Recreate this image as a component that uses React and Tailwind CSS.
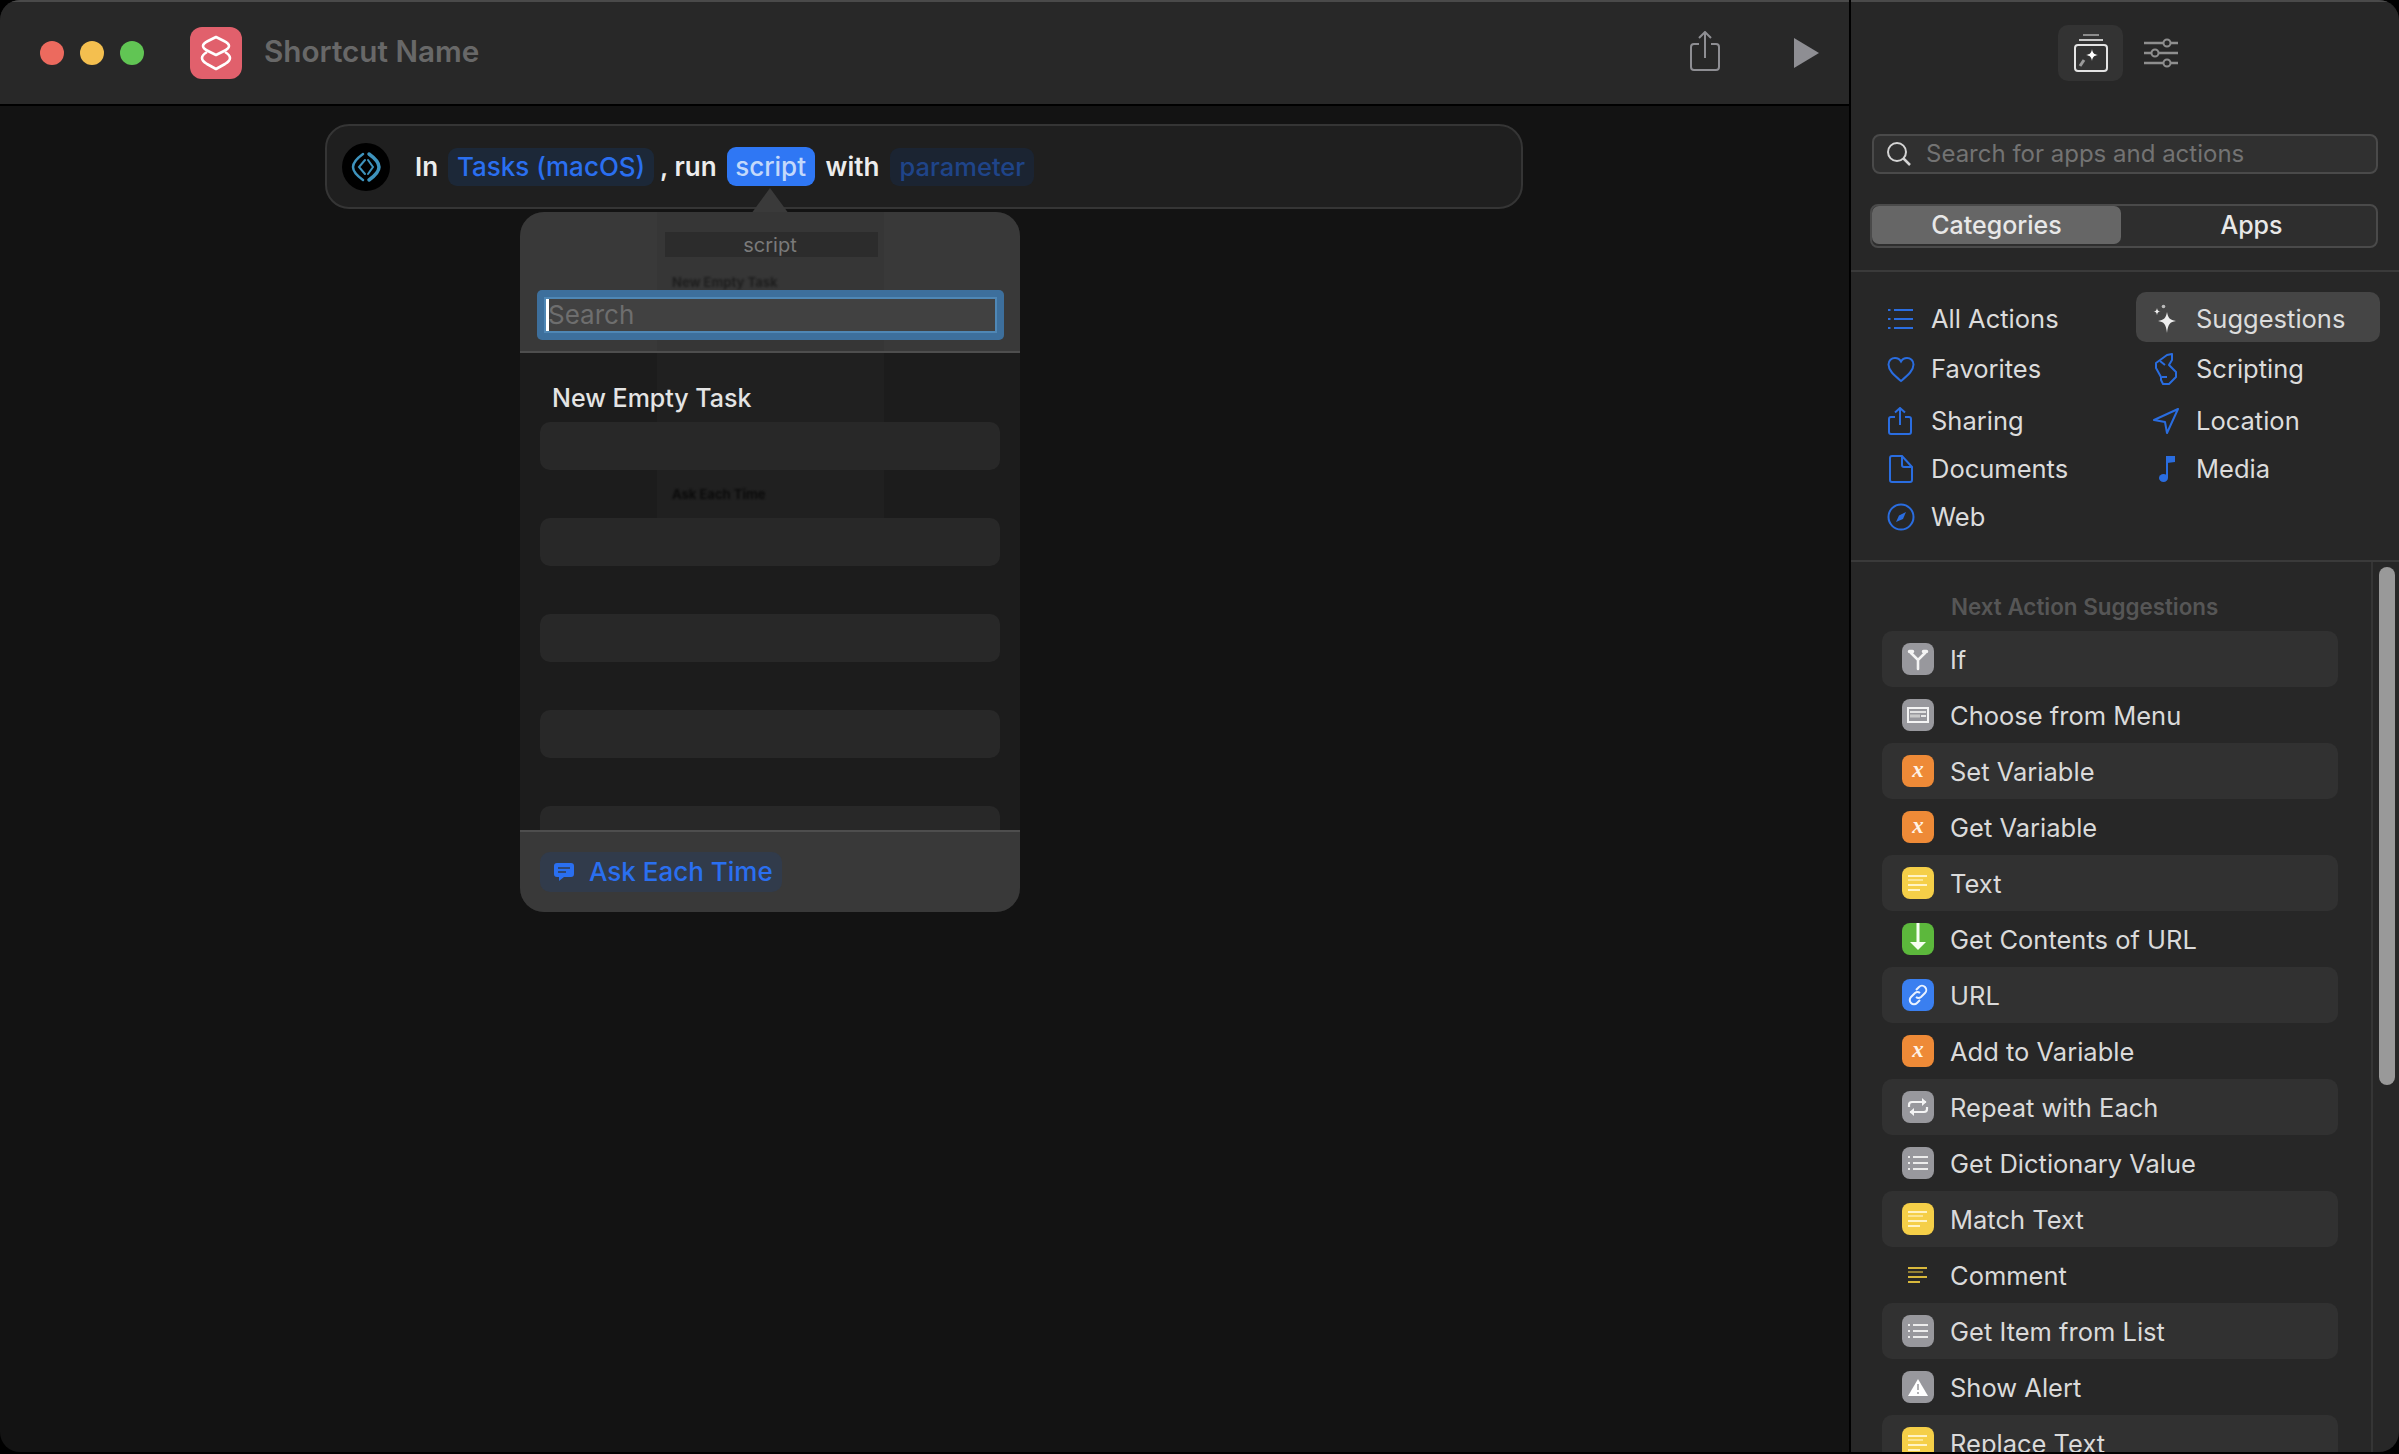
import React from "react";

const GRAY = "bg-[#98989d]";
const ORANGE = "bg-[#ee8a37]";
const YELLOW = "bg-[#f5cf48]";

const IfGlyph = () => (
  <svg viewBox="0 0 32 32" className="h-8 w-8" fill="none" stroke="#f4f4f4" strokeWidth="2.6" strokeLinecap="round">
    <path d="M9 10l7 7 7-7M16 17v9" />
    <path d="M7.5 8.5h3M21.5 8.5h3" strokeWidth="3.5" />
  </svg>
);

const MenuGlyph = () => (
  <svg viewBox="0 0 32 32" className="h-8 w-8" fill="none">
    <rect x="6" y="9" width="20" height="14" stroke="#f4f4f4" strokeWidth="2" />
    <path d="M8 13h16" stroke="#e2e2e2" strokeWidth="2" />
    <path d="M8 17h10" stroke="#c9c9c9" strokeWidth="3" />
    <path d="M19 17h5" stroke="#e9e9e9" strokeWidth="2" />
  </svg>
);

const VariableGlyph = () => (
  <span className="flex h-8 w-8 items-center justify-center pb-[3px] font-['Liberation_Serif',serif] text-[23px] font-bold italic leading-none text-[#fff3e6]">
    x
  </span>
);

const TextGlyph = ({ color = "#fff3c4" }) => (
  <svg viewBox="0 0 32 32" className="h-8 w-8" fill="none" stroke={color} strokeWidth="2">
    <path d="M6 9h19" />
    <path d="M6 13h15" strokeOpacity="0.6" />
    <path d="M6 18h19" />
    <path d="M6 23h12" />
  </svg>
);

const ArrowGlyph = () => (
  <svg viewBox="0 0 32 32" className="h-8 w-8" fill="#f6fff2">
    <path d="M14.5 0h3v20h-3z" />
    <path d="M8 19h16l-8 8z" />
  </svg>
);

const LinkGlyph = () => (
  <svg viewBox="0 0 32 32" className="h-8 w-8" fill="none" stroke="#eaf2ff" strokeWidth="2">
    <path d="M14 11l3-3a4 4 0 0 1 6 6l-4 4a4 4 0 0 1-5 0" />
    <path d="M18 21l-3 3a4 4 0 0 1-6-6l4-4a4 4 0 0 1 5 0" />
  </svg>
);

const RepeatGlyph = () => (
  <svg viewBox="0 0 32 32" className="h-8 w-8" fill="none" stroke="#f4f4f4" strokeWidth="2.2">
    <path d="M7 16v-2a3 3 0 0 1 3-3h14" />
    <path d="M25 16v2a3 3 0 0 1-3 3H8" />
    <path d="M20 7l4.500 4-4.500 4M12 17l-4.500 4 4.500 4" fill="#f4f4f4" stroke="none" />
  </svg>
);

const ListGlyph = () => (
  <svg viewBox="0 0 32 32" className="h-8 w-8" fill="none" stroke="#ececec" strokeWidth="2">
    <path d="M6 10h2M11 10h15M6 16h2M11 16h15M6 22h2M11 22h15" />
  </svg>
);

const AlertGlyph = () => (
  <svg viewBox="0 0 32 32" className="h-8 w-8">
    <path d="M16 8l10 17H6z" fill="#fff" />
    <path d="M16 13v6M16 21v2" stroke="#98989d" strokeWidth="1.500" />
  </svg>
);

const actions = [
  { name: "If", bg: GRAY, glyph: <IfGlyph /> },
  { name: "Choose from Menu", bg: GRAY, glyph: <MenuGlyph /> },
  { name: "Set Variable", bg: ORANGE, glyph: <VariableGlyph /> },
  { name: "Get Variable", bg: ORANGE, glyph: <VariableGlyph /> },
  { name: "Text", bg: YELLOW, glyph: <TextGlyph /> },
  { name: "Get Contents of URL", bg: "bg-[#5cb83c]", glyph: <ArrowGlyph /> },
  { name: "URL", bg: "bg-[#3a7ff0]", glyph: <LinkGlyph /> },
  { name: "Add to Variable", bg: ORANGE, glyph: <VariableGlyph /> },
  { name: "Repeat with Each", bg: GRAY, glyph: <RepeatGlyph /> },
  { name: "Get Dictionary Value", bg: GRAY, glyph: <ListGlyph /> },
  { name: "Match Text", bg: YELLOW, glyph: <TextGlyph /> },
  { name: "Comment", bg: "", glyph: <TextGlyph color="#d9b93c" /> },
  { name: "Get Item from List", bg: GRAY, glyph: <ListGlyph /> },
  { name: "Show Alert", bg: GRAY, glyph: <AlertGlyph /> },
  { name: "Replace Text", bg: YELLOW, glyph: <TextGlyph /> },
];

const blueIcon = {
  fill: "none",
  stroke: "#2a6de0",
  strokeWidth: "2",
  className: "h-7 w-7",
  viewBox: "0 0 28 28",
};

const leftCategories = [
  {
    name: "All Actions",
    shift: "pt-[4px]",
    icon: (
      <svg {...blueIcon}>
        <path d="M1 5h2.500M7 5h19M1 14h2.500M7 14h19M1 23h2.500M7 23h19" />
      </svg>
    ),
  },
  {
    name: "Favorites",
    shift: "pt-[4px]",
    icon: (
      <svg {...blueIcon}>
        <path d="M14 26C7 20 1.500 15.500 1.500 9.500 1.500 5.500 4.500 3 8 3c2.500 0 4.800 1.300 6 3.500C15.200 4.300 17.500 3 20 3c3.500 0 6.500 2.500 6.500 6.500 0 6-5.500 10.500-12.500 16.500z" />
      </svg>
    ),
  },
  {
    name: "Sharing",
    shift: "pt-[8px]",
    icon: (
      <svg {...blueIcon}>
        <path d="M8 10H4a2 2 0 0 0-2 2v13a2 2 0 0 0 2 2h18a2 2 0 0 0 2-2V12a2 2 0 0 0-2-2h-4M13 18V1M8 5.500L13 1l5 4.500" />
      </svg>
    ),
  },
  {
    name: "Documents",
    shift: "pt-[4px]",
    icon: (
      <svg {...blueIcon}>
        <path d="M5 1h10l10 11v13a2 2 0 0 1-2 2H5a2 2 0 0 1-2-2V3a2 2 0 0 1 2-2zM15 1v9a2 2 0 0 0 2 2h8" />
      </svg>
    ),
  },
  {
    name: "Web",
    icon: (
      <svg {...blueIcon}>
        <circle cx="14" cy="14" r="12.500" />
        <path d="M19 9l-7 3.500L9 19l7-3z" fill="#2a6de0" stroke="none" />
      </svg>
    ),
  },
];

const rightCategories = [
  {
    name: "Suggestions",
    active: true,
    shift: "pt-[4px]",
    icon: (
      <svg viewBox="0 0 28 30" className="h-[30px] w-7" fill="#eeeeee">
        <path d="M15 8c1 6 3 8 9 9-6 1-8 3-9 12-1-9-3-11-9-12 6-1 8-3 9-9z" />
        <path d="M5 4c.4 2.600 1 3.200 3.500 3.600C6 8 5.400 8.600 5 11.200 4.600 8.600 4 8 1.500 7.600 4 7.200 4.600 6.600 5 4z" />
        <circle cx="11.500" cy="2.500" r="1.800" fill="#bbbbbb" />
      </svg>
    ),
  },
  {
    name: "Scripting",
    shift: "pt-[4px]",
    icon: (
      <svg viewBox="0 0 22 32" className="h-8 w-[22px]" fill="none" stroke="#2a6de0" strokeWidth="2" strokeLinejoin="round">
        <path d="M12 2l5-1v6l-3 5 7 7v5l-7 7H8l-2-4v-3L1 15v-5z" />
        <path d="M5 8l5 4M7 24h5" />
      </svg>
    ),
  },
  {
    name: "Location",
    shift: "pt-[8px]",
    icon: (
      <svg viewBox="0 0 28 28" className="h-7 w-7" fill="none" stroke="#2a6de0" strokeWidth="2" strokeLinejoin="round">
        <path d="M26 2L2 13l11 2 2 11z" />
      </svg>
    ),
  },
  {
    name: "Media",
    shift: "pt-[4px]",
    icon: (
      <svg viewBox="0 0 28 28" className="h-7 w-7" fill="#2a6de0">
        <path d="M14 1h2v22h-2z" />
        <path d="M15 1h8v6l-8 1z" />
        <ellipse cx="11.500" cy="23" rx="4.500" ry="4" />
      </svg>
    ),
  },
];

const CategoryRow = ({ item }) => (
  <div
    className={`flex h-[50px] items-center rounded-[10px] ${item.shift || ""} ${item.active ? "bg-[#454545]" : ""}`}
  >
    <span className="flex w-[60px] shrink-0 justify-center">{item.icon}</span>
    <span className="text-[25.5px] leading-none text-[#dcdcdc]">{item.name}</span>
  </div>
);

const Pill = ({ className, children }) => (
  <span className={`flex h-[38px] items-center justify-center rounded-[9px] font-medium ${className}`}>
    {children}
  </span>
);

const ShortcutPicker = () => (
  <div className="absolute left-[520px] top-[212px] h-[700px] w-[500px]">
    {/* little arrow up to the script token */}
    <div className="absolute left-[231px] top-[-24px] h-[26px] w-[38px] bg-[#3a3a3a] [clip-path:polygon(50%_0,100%_100%,0_100%)]" />
    <div className="relative flex h-full flex-col overflow-hidden rounded-[24px] bg-[#1c1c1c]">
      <div className="relative h-[141px] border-b-2 border-[#4e4e4e] bg-[#393939]">
        {/* the blurred window behind the material */}
        <div className="absolute left-[137px] top-0 h-full w-[227px] bg-[#363636]" />
        <div className="absolute left-[145px] top-[20px] flex h-[25px] w-[213px] items-center justify-center bg-[#2c2c2c] pr-[3px] text-[20px] text-[#7a7a7a]">
          script
        </div>
        <div className="absolute left-[152px] top-[64px] text-[13px] font-bold leading-none text-[#1e1e1e] blur-[1px]">
          New Empty Task
        </div>
        <div className="absolute left-[17px] top-[78px] flex h-[50px] w-[467px] rounded-[5px] bg-[#3d6f9c] p-[7px]">
          <div className="flex h-full w-full items-center border-2 border-[#4f87b5] bg-[#414141]">
            <span className="h-full w-[3px] bg-white" />
            <span className="-ml-[1px] text-[26px] leading-none text-[#6e6e6e]">Search</span>
          </div>
        </div>
      </div>
      <div className="relative flex-1 overflow-hidden">
        <div className="absolute left-[137px] top-0 h-[168px] w-[227px] bg-[#202020]" />
        <div className="absolute left-[152px] top-[135px] text-[13px] font-bold leading-none text-[#0b0b0b] blur-[1px]">
          Ask Each Time
        </div>
        <div className="relative px-[32px] pb-[8px] pt-[30px] text-[25px] font-medium leading-[31px] text-[#e4e4e4]">
          New Empty Task
        </div>
        <div className="relative flex flex-col gap-[48px] px-[20px]">
          {[0, 1, 2, 3, 4].map((i) => (
            <div key={i} className="h-[48px] shrink-0 rounded-[10px] bg-[#282828]" />
          ))}
        </div>
      </div>
      <div className="flex h-[82px] items-center border-t-2 border-[#4e4e4e] bg-[#393939] px-[20px]">
        <div className="flex h-[40px] w-[242px] items-center gap-[14px] rounded-[10px] bg-[#313b4b] pl-[13px]">
          <svg viewBox="0 0 22 20" className="h-5 w-[22px]" fill="#2a6ff0">
            <path d="M4 1h14a3 3 0 0 1 3 3v8a3 3 0 0 1-3 3H11l-5 4v-4H4a3 3 0 0 1-3-3V4a3 3 0 0 1 3-3z" />
            <path d="M5 6h12M5 10h8" stroke="#313b4b" strokeWidth="1.500" />
          </svg>
          <span className="text-[26px] font-medium leading-none text-[#2a6ff0]">Ask Each Time</span>
        </div>
      </div>
    </div>
  </div>
);

const App = () => {
  return (
    <div className="relative h-[1454px] w-[2399px] overflow-hidden bg-black font-['Inter',sans-serif]">
      <div className="flex h-[1452px] overflow-hidden rounded-[20px]">
        {/* editor */}
        <div className="flex w-[1849px] shrink-0 flex-col bg-[#131313]">
          <header className="flex h-[106px] shrink-0 items-center border-b-2 border-t-2 border-b-black border-t-[#4a4a4a] bg-[#282828]">
            <div className="ml-[40px] flex gap-[16px]">
              <span className="h-6 w-6 rounded-full bg-[#ec6a5e]" />
              <span className="h-6 w-6 rounded-full bg-[#f4bf4f]" />
              <span className="h-6 w-6 rounded-full bg-[#61c554]" />
            </div>
            <div className="ml-[46px] flex h-[52px] w-[52px] items-center justify-center rounded-[12px] bg-[#e1606c]">
              <svg viewBox="0 0 40 40" className="h-10 w-10" fill="none" stroke="#fff" strokeWidth="2.600" strokeLinejoin="round">
                <path d="M20 4l8 4q5 2.500 5 5t-5 5l-8 4-8-4q-5-2.500-5-5t5-5z" />
                <path d="M11 19q-5 3-5 6t5 6l9 5 9-5q5-3 5-6t-5-6" />
              </svg>
            </div>
            <span className="ml-[22px] pb-[2px] text-[29.7px] font-semibold leading-none text-[#686868]">Shortcut Name</span>
            <div className="ml-auto flex items-center gap-[74px] pr-[30px]">
              <svg viewBox="0 0 30 40" className="mb-[5px] h-10 w-[30px]" fill="none" stroke="#8e8e93" strokeWidth="2">
                <path d="M9 13H4a3 3 0 0 0-3 3v20a3 3 0 0 0 3 3h22a3 3 0 0 0 3-3V16a3 3 0 0 0-3-3h-5M15 27V2M9 7l6-6 6 6" />
              </svg>
              <svg viewBox="0 0 25 30" className="h-[30px] w-[25px]" fill="#8e8e93">
                <path d="M0 0l25 15L0 30z" />
              </svg>
            </div>
          </header>
          <div className="flex pl-[325px] pt-[18px]">
            <div className="flex h-[85px] w-[1198px] items-center rounded-[24px] border-2 border-[#353535] bg-[#1f1f1f] pl-[15px] text-[26px] font-semibold leading-none text-[#ececec]">
              <span className="flex h-12 w-12 items-center justify-center rounded-full bg-black">
                <svg viewBox="0 0 32 32" className="h-8 w-8" fill="none" stroke="#3e93bd" strokeLinecap="round">
                  <path d="M13 3C6 8 3 12 3 16s3 8 10 13" strokeWidth="2.500" />
                  <path d="M19 3c7 5 10 9 10 13s-3 8-10 13" strokeWidth="3.500" />
                  <path d="M15 9l-6 7 6 7M18 9l5 7-5 7" strokeWidth="2" />
                </svg>
              </span>
              <span className="ml-[25px]">In</span>
              <Pill className="ml-[10px] w-[206px] bg-[#1c2838] text-[#2a6ff0]">Tasks (macOS)</Pill>
              <span className="ml-[6px]">, run</span>
              <Pill className="ml-[10px] h-[39px] w-[88px] bg-[#2f77f4] text-[#c3d9fb]">script</Pill>
              <span className="ml-[11px]">with</span>
              <Pill className="ml-[11px] w-[144px] bg-[#1b2432] text-[25.5px] text-[#1f4489]">parameter</Pill>
            </div>
          </div>
        </div>

        <div className="w-[2px] shrink-0 bg-black" />

        {/* library */}
        <aside className="flex min-w-0 flex-1 flex-col border-t-2 border-t-[#4a4a4a] bg-[#272727]">
          <div className="flex h-[104px] shrink-0 items-center justify-center pb-[2px] pr-[14px]">
            <div className="flex h-14 w-[65px] items-center justify-center rounded-[10px] bg-[#333333]">
              <svg viewBox="0 0 36 40" className="h-10 w-9" fill="none" stroke="#e4e4e4" strokeWidth="2">
                <path d="M10 2h16" stroke="#8c8c8c" />
                <path d="M6 7h24" stroke="#c8c8c8" />
                <rect x="2" y="12" width="32" height="26" rx="3" />
                <path d="M19 16c.6 4 2 5.400 6 6-4 .6-5.400 2-6 6-.6-4-2-5.400-6-6 4-.6 5.400-2 6-6z" fill="#fff" stroke="none" />
                <path d="M11 27l-4 6" stroke="#9a9a9a" strokeWidth="3" />
              </svg>
            </div>
            <svg viewBox="0 0 34 30" className="ml-[21px] h-[30px] w-[34px]" fill="#272727" stroke="#8e8e8e" strokeWidth="2">
              <path d="M0 5h34M0 15h34M0 25h34" strokeWidth="2.500" />
              <circle cx="23" cy="5" r="3.500" />
              <circle cx="11" cy="15" r="3.500" />
              <circle cx="23" cy="25" r="3.500" />
            </svg>
          </div>

          <div className="shrink-0 border-b-2 border-[#3a3a3a] px-[21px] pb-[22px] pt-[28px]">
            <div className="flex h-[40px] items-center rounded-[8px] border-2 border-[#4a4a4a] bg-[#303030] pl-[12px]">
              <svg viewBox="0 0 26 26" className="h-[26px] w-[26px]" fill="none" stroke="#d4d4d4" strokeWidth="2">
                <circle cx="11" cy="11" r="9" />
                <path d="M17.500 17.500L24 24" strokeWidth="2.500" />
              </svg>
              <span className="ml-[14px] text-[24px] leading-none text-[#737373]">Search for apps and actions</span>
            </div>
            <div className="-ml-[2px] mt-[30px] flex h-[44px] rounded-[8px] border-2 border-[#4a4a4a] bg-[#2e2e2e] pb-[2px] text-[25px] font-medium leading-none text-[#e8e8e8]">
              <div className="flex w-[249px] items-center justify-center rounded-[7px] bg-[#666666] pt-[2px]">
                <span className="-mt-[2px]">Categories</span>
              </div>
              <div className="flex flex-1 items-center justify-center pl-[6px]">Apps</div>
            </div>
          </div>

          <div className="grid h-[290px] shrink-0 grid-cols-[265px_244px] content-start border-b-2 border-[#3a3a3a] pl-[20px] pt-[20px]">
            <div className="flex flex-col">
              {leftCategories.map((item) => (
                <CategoryRow key={item.name} item={item} />
              ))}
            </div>
            <div className="flex flex-col">
              {rightCategories.map((item) => (
                <CategoryRow key={item.name} item={item} />
              ))}
            </div>
          </div>

          <div className="flex min-h-0 flex-1">
            <div className="min-w-0 flex-1 overflow-hidden pl-[31px] pr-[33px]">
              <div className="pl-[69px] pt-[32px] text-[22.4px] font-semibold leading-[26px] text-[#565656]">
                Next Action Suggestions
              </div>
              <div className="mt-[11px] flex flex-col">
                {actions.map((action, i) => (
                  <div
                    key={action.name}
                    className={`flex h-14 shrink-0 items-center rounded-[10px] pl-[20px] ${i % 2 === 0 ? "bg-[#313131]" : ""}`}
                  >
                    <span className={`flex h-8 w-8 shrink-0 items-center justify-center overflow-hidden rounded-[8px] ${action.bg}`}>
                      {action.glyph}
                    </span>
                    <span className="ml-[16px] pt-[2px] text-[25.5px] leading-none text-[#dadada]">{action.name}</span>
                  </div>
                ))}
              </div>
            </div>
            <div className="w-[28px] shrink-0 border-l-2 border-[#353535] pl-[6px] pt-[5px]">
              <div className="h-[518px] w-4 rounded-full bg-[#999999]" />
            </div>
          </div>
        </aside>
      </div>
      <ShortcutPicker />
    </div>
  );
};

export default App;
